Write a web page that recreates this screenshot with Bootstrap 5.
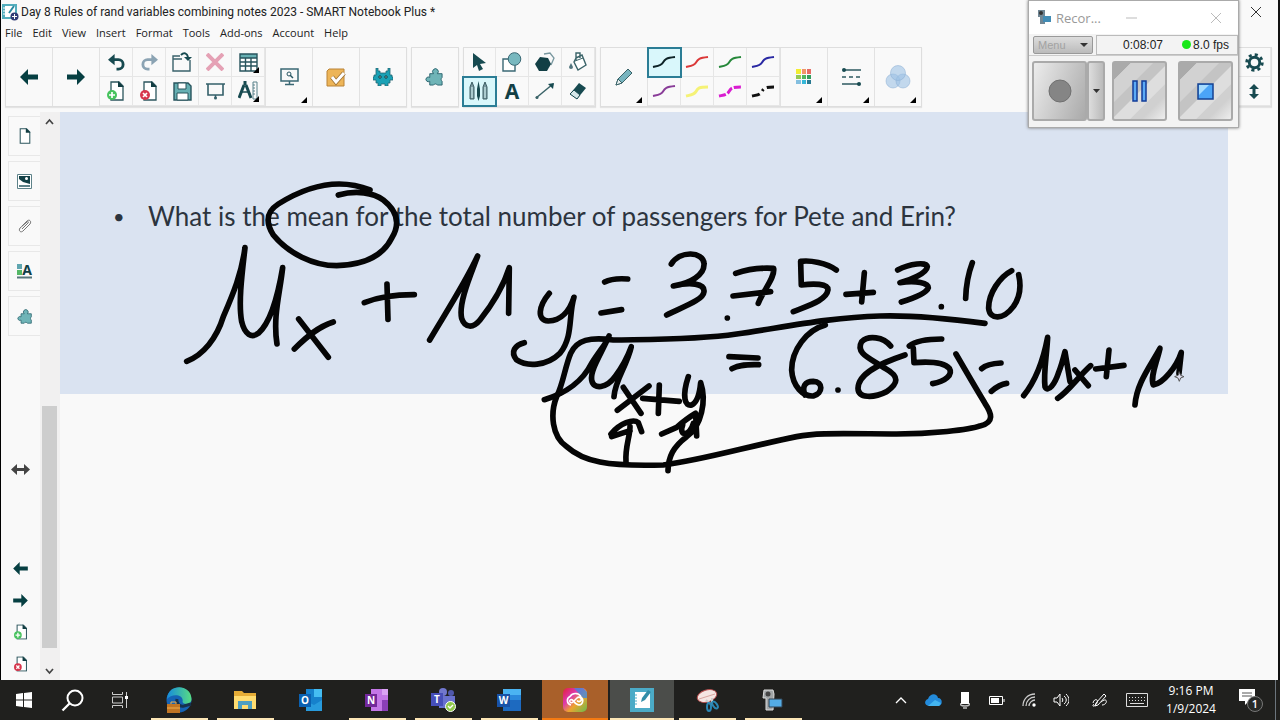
<!DOCTYPE html>
<html lang="en">
<head>
<meta charset="utf-8">
<meta name="viewport" content="width=device-width, initial-scale=1">
<title>SMART Notebook Plus</title>
<link href="https://cdn.jsdelivr.net/npm/bootstrap@5.3.0/dist/css/bootstrap.min.css" rel="stylesheet">
<style>
body{font-family:"Open Sans","Noto Sans",sans-serif;font-size:12px;line-height:16px;color:#222;background:#f9f9f9;overflow:hidden}
svg{display:block;flex:none}
.btn{--bs-btn-border-radius:0;font-size:12px;line-height:16px;color:inherit;display:flex;align-items:center;justify-content:center;padding:0;border:0}
.app{min-height:100vh;position:relative}
.work{border-left:1px solid #000;border-right:2px solid #111;min-height:0}
.titlebar{height:24px;padding:0 16px 0 1px;gap:2px}
.titletext{font-family:Roboto,sans-serif;font-size:12px}
.menus{height:23px;padding:1px 0 0 4px;gap:10px;font-size:11px}
.menus a{color:#222;text-decoration:none}
.ribbon{padding:0 6px 0 4px;gap:4px;height:65px}
.tgroup{border:1px solid #dedede;height:60px;box-shadow:0 1px 1px #e4e4e4}
.big{width:47px;align-self:stretch;position:relative}
.big+.big,.big+.smalls,.smalls+.big{border-left:1px solid #e2e2e2}
.tgroup .big:first-child,.tgroup .smalls:first-child{margin-left:-1px}
.smalls{display:grid;grid-template-rows:29px 29px;grid-auto-flow:column;grid-auto-columns:33px}
.smalls .btn{position:relative;border-right:1px solid #e6e6e6;border-bottom:1px solid #e6e6e6}
.smalls .btn.on{background:#d9f7fb;outline:2px solid #2b7d95;outline-offset:-1px;z-index:1}
.more::after{content:"";position:absolute;right:5px;bottom:3px;border-left:6px solid transparent;border-bottom:6px solid #000}
.side{width:39px;padding:4px 0 0 7px}
.tab{height:40px;width:32px;border:1px solid #e8e8e8;border-right:0;margin-bottom:5px}
.plain{height:32px;width:25px}
.resizer{margin-top:112px;margin-bottom:auto}
.scroller{width:20px;background:#f1f0f0;padding:0 3px 0 2px}
.thumb{height:242px;background:#cdcdcd;width:100%}
.canvas{position:relative;overflow:hidden}
.slide{background:#dae3f1;min-height:282px;margin-right:50px;padding:88px 0 0 53px;font-family:Lato,sans-serif;font-size:26px;line-height:32px;color:#2c343e;white-space:nowrap}
.slide ul{padding-left:35px;list-style:none}
.slide li::before{content:"•";float:left;margin-left:-35px;font-size:20px}
.ink{position:absolute;left:0;top:0;fill:none;stroke:#050505;stroke-width:17;stroke-linecap:round;stroke-linejoin:round}
.taskbar{height:40px;background:#20201e;color:#fff}
.taskbar .btn{height:40px;color:#fff;position:relative}
.sys{width:48px}
.apps{padding-left:2px}
.tapp{width:66px}
.run::after{content:"";position:absolute;left:5px;right:4px;bottom:0;height:2px;background:#fce6b6}
.cc{background:#a9602a}.cc::after{background:#f47a12;left:0;right:0}
.act{background:#4b4d4a;border-left:2px solid #20201e!important}.act::after{left:0;right:0}
.tray{width:32px}
.pen{width:44px}
.taskbar .clock{width:82px;padding-right:6px;font-size:12px;line-height:18px;text-align:center}
.recorder{position:absolute;right:41px;top:0;width:211px;height:128px;background:#f3f3f3;border:1px solid #aaa;box-shadow:0 0 3px #777;z-index:3}
.rtitle{height:33px;background:#fff;padding:0 16px 0 8px;color:#999;font-size:13px}
.rstat{height:22px;border-bottom:1px solid #ccc;padding-left:4px;gap:3px;font-family:"Liberation Sans",sans-serif;color:#222}
.rmenu{width:60px;height:18px;border:1px solid #999;border-radius:2px;background:linear-gradient(#ddd,#bbb);appearance:none;color:#a2a2a2;font-size:11px;line-height:14px;padding:0 4px}
.rmenuwrap{position:relative}
.rmenuwrap::after{content:"";position:absolute;right:5px;top:7px;border:4px solid transparent;border-top-color:#333;border-bottom:0}
.rbox{border:1px solid #bbb;height:20px;padding:0 8px 0 26px;font-size:12px;line-height:16px}
.fps{gap:2px}
.dot{width:9px;height:9px;border-radius:50%;background:#18e818}
.rbtns{padding:5px 5px 0 3px}
.rb{height:60px;width:55px;border:2px solid #aaa!important;border-radius:3px!important;background:linear-gradient(135deg,#aaa 0 15%,#d2d2d2 16% 36%,#c4c4c4 37% 50%,#dedede 51% 67%,#d0d0d0 68% 78%,#eee)}
.rb.rec{background:linear-gradient(110deg,#ececec,#aaa)}
.rb.rd{width:18px;background:linear-gradient(90deg,#ddd,#bbb)}
.pausebtn{margin-right:5px}
</style>
</head>
<body>
<svg width="0" height="0" class="position-absolute" aria-hidden="true"><defs>
<symbol id="left" viewBox="0 0 18 16"><path d="M0 8 8 0v5.500h10v5H8V16z" fill="#063f42"/></symbol>
<symbol id="right" viewBox="0 0 18 16"><path d="M18 8 10 0v5.500H0v5h10V16z" fill="#063f42"/></symbol>
<symbol id="undo" viewBox="0 0 18 18"><path d="M5 6h6a4.500 4.500 0 0 1 0 10H9" fill="none" stroke="currentColor" stroke-width="3"/><path d="M0 6 7 0v12z" fill="currentColor"/></symbol>
<symbol id="page" viewBox="0 0 18 20"><path d="M4 1h8l4 4v14H4z" fill="#fff" stroke="#2c565d" stroke-width="1.300"/><path d="M11 0v6h6z" fill="#123d42"/></symbol>
<symbol id="padd" viewBox="0 0 18 20"><use href="#page"/><circle cx="5" cy="14" r="5" fill="#47c35e"/><path d="M5 11v6M2 14h6" stroke="#fff" stroke-width="1.700"/></symbol>
<symbol id="pdel" viewBox="0 0 18 20"><use href="#page"/><circle cx="5" cy="14" r="5" fill="#d7364c"/><path d="m3 12 4 4m0-4-4 4" stroke="#fff" stroke-width="1.700"/></symbol>
<symbol id="puzzle" viewBox="0 0 20 19"><path d="M5 6h4a3 3 0 1 1 4 0h5v4a2.500 2.500 0 0 0 0 4v4h-5a2.300 2.300 0 0 0-4 0H5v-4a2.500 2.500 0 1 1 0-4z" fill="#6fb4b7" stroke="#2c6670"/></symbol>
<symbol id="squig" viewBox="0 0 24 12"><path d="M1 11C6 10 9 10 11 6.500S14 2 23 1" fill="none" stroke="currentColor" stroke-width="2"/></symbol>
</defs></svg>

<div class="app d-flex flex-column">
<main class="work flex-grow-1 d-flex flex-column">
  <header class="titlebar d-flex align-items-center">
    <svg width="17" height="17" viewBox="0 0 17 17"><path d="M0 0h15v15H0z" fill="#54aebd"/><path d="M3 2h10v11H3z" fill="#fff"/><path d="M1 4h3M1 7h3M1 10h3" stroke="#fff"/><path d="m7 9 5-7" stroke="#2989a0" stroke-width="2"/><circle cx="12.500" cy="12.500" r="4" fill="#303c75"/><path d="M12.500 10v5M10 12.500h5" stroke="#fff"/></svg>
    <span class="titletext flex-grow-1">Day 8 Rules of rand variables combining notes 2023 - SMART Notebook Plus *</span>
    <button class="btn" aria-label="Close"><svg width="12" height="12" viewBox="0 0 12 12"><path d="m1 1 10 10m0-10L1 11" stroke="#333"/></svg></button>
  </header>
  <nav class="menus d-flex align-items-start"><a href="#">File</a><a href="#">Edit</a><a href="#">View</a><a href="#">Insert</a><a href="#">Format</a><a href="#">Tools</a><a href="#">Add-ons</a><a href="#">Account</a><a href="#">Help</a></nav>
  <div class="ribbon d-flex">
    <div class="tgroup d-flex">
      <button class="btn big" aria-label="Previous page"><svg width="18" height="16"><use href="#left"/></svg></button>
      <button class="btn big" aria-label="Next page"><svg width="18" height="16"><use href="#right"/></svg></button>
      <div class="smalls">
        <button class="btn" aria-label="Undo"><svg width="17" height="17" color="#174a50"><use href="#undo"/></svg></button>
        <button class="btn" aria-label="Add page"><svg width="18" height="20"><use href="#padd"/></svg></button>
        <button class="btn" aria-label="Redo"><svg width="17" height="17" viewBox="0 0 18 18" color="#8ba3b3"><use href="#undo" width="18" height="18" transform="matrix(-1 0 0 1 18 0)"/></svg></button>
        <button class="btn" aria-label="Delete page"><svg width="18" height="20"><use href="#pdel"/></svg></button>
        <button class="btn" aria-label="Open"><svg width="20" height="20" viewBox="0 0 20 20"><path d="M8 4H1v15h17V8M1 7h9" fill="none" stroke="#3a626b" stroke-width="1.400"/><path d="M9 3c3-3 6-2 7 2" fill="none" stroke="#174a50" stroke-width="2"/><path d="M12 5h8l-4 4z" fill="#174a50"/></svg></button>
        <button class="btn" aria-label="Save"><svg width="19" height="19" viewBox="0 0 19 19"><path d="M1 1h14l3 3v14H1z" fill="#66afb2" stroke="#28545d" stroke-width="1.400"/><path d="M5 1h8v6H5zM4 11h11v7H4z" fill="#fff" stroke="#28545d"/></svg></button>
        <button class="btn" aria-label="Delete"><svg width="18" height="18" viewBox="0 0 18 18"><path d="m1 1 16 16m0-16L1 17" stroke="#e5a1b5" stroke-width="4"/></svg></button>
        <button class="btn" aria-label="Screen shade"><svg width="19" height="18" viewBox="0 0 19 18"><path d="M0 2h19M2 2v11h15V2M9.500 13v3" fill="none" stroke="#35606a" stroke-width="1.600"/><circle cx="9.500" cy="16" r="1.500" fill="#35606a"/></svg></button>
        <button class="btn more" aria-label="Table"><svg width="19" height="19" viewBox="0 0 19 19"><path d="M1 1h17v17H1z" fill="#fff"/><path d="M1 1h17v4H1z" fill="#66afb2"/><path d="M1 1h17v17H1zM1 5h17M1 9h17M1 13h17M6.500 5v13M12 5v13" fill="none" stroke="#28545d" stroke-width="1.400"/></svg></button>
        <button class="btn more" aria-label="Measurement tools"><svg width="20" height="20" viewBox="0 0 20 20"><path d="M7 0v4M6 4 1 17M8 4l5 13" fill="none" stroke="#174a50" stroke-width="3"/><path d="M4 11h6" stroke="#174a50" stroke-width="1.500"/><path d="M15 1h4v17h-4zM15 4h2M15 7h2M15 10h2M15 13h2" fill="none" stroke="#58818a"/></svg></button>
      </div>
      <button class="btn big more" aria-label="Screen capture"><svg width="19" height="18" viewBox="0 0 19 18"><path d="M1 1h17v12H1zM9.500 13v3M5 16.500h9" fill="none" stroke="#3a6874" stroke-width="1.500"/><circle cx="9" cy="6" r="2" fill="none" stroke="#295763"/><path d="m10 7 3 3" stroke="#295763" stroke-width="1.500"/></svg></button>
      <button class="btn big" aria-label="Response"><svg width="20" height="19" viewBox="0 0 20 19"><path d="M3 1h15v17H1V3z" fill="#edb558" stroke="#ba8337"/><path d="m6 9 4 5 8-9" fill="none" stroke="#9c7032" stroke-width="4.500"/><path d="m6 9 4 5 8-9" fill="none" stroke="#fff" stroke-width="3"/></svg></button>
      <button class="btn big" aria-label="Game activities"><svg width="20" height="18" viewBox="0 0 20 18"><path d="M3 0h2v3h2v2h6V3h2V0h2v7h2v2h1v3h-3v3h-2v3h-3v-2H8v2H5v-3H3v-3H0V9h1V7h2z" fill="#1aa1b5" stroke="#246775" stroke-width=".8"/><path d="M6 8h2v2H6zm6 0h2v2h-2z" fill="#e5fbfd" stroke="#123d42"/></svg></button>
    </div>
    <div class="tgroup d-flex"><button class="btn big" aria-label="Add-ons"><svg width="19" height="18"><use href="#puzzle"/></svg></button></div>
    <div class="tgroup d-flex"><div class="smalls">
      <button class="btn" aria-label="Select"><svg width="14" height="18" viewBox="0 0 14 18"><path d="M1 0v15l4-3 2 6 4-2-3-5 6-1z" fill="#174a50"/></svg></button>
      <button class="btn on" aria-label="Pens"><svg width="20" height="20" viewBox="0 0 20 20"><path d="M1 18V6l2-5 2 5v12zM14 18V6l2-5 2 5v12z" fill="#78979f" stroke="#3c5e65"/><path d="M3 6v11M16 6v11" stroke="#dff"/><path d="M8 8 9.500 0 11 8v7l-1.500 5L8 15z" fill="#174a50"/></svg></button>
      <button class="btn" aria-label="Shapes"><svg width="20" height="20" viewBox="0 0 20 20"><path d="M1 7h12v12H1z" fill="#fff" stroke="#3a6874" stroke-width="1.400"/><circle cx="12.500" cy="7" r="6.300" fill="#78b8bf" stroke="#3a6874"/></svg></button>
      <button class="btn" aria-label="Text"><svg width="22" height="28" viewBox="0 0 22 28"><text x="11" y="22" font-family="Noto Sans" font-weight="700" font-size="21" text-anchor="middle" fill="#123f45">A</text></svg></button>
      <button class="btn" aria-label="Regular polygons"><svg width="20" height="20" viewBox="0 0 20 20"><path d="m9 2 6-1 4 5-3 7" fill="none" stroke="#78979f" stroke-width="1.300"/><path d="m5 5 8 1 3 6-4 7H4l-4-7z" fill="#123f45"/></svg></button>
      <button class="btn" aria-label="Lines"><svg width="20" height="18" viewBox="0 0 20 18"><path d="M1 16 18 2" stroke="#3a6368" stroke-width="1.500"/><circle cx="2" cy="15.500" r="1.500" fill="#3a6368"/><path d="m19 1-1 6-5-5z" fill="#174a50"/></svg></button>
      <button class="btn" aria-label="Fill"><svg width="18" height="20" viewBox="0 0 18 20"><path d="m7 6 6-3 4 10-8 5-4-8zM7 8V1h4v5" fill="#fff" stroke="#3a6368" stroke-width="1.400"/><path d="m6 9 8-3" stroke="#3a6368"/><path d="m2 11 2 4a2 2 0 1 1-4 0z" fill="#51747d"/></svg></button>
      <button class="btn" aria-label="Eraser"><svg width="18" height="18" viewBox="0 0 18 18"><path d="m10 1 7 5-9 11-7-5z" fill="#174a50"/><path d="m5 8 6 5-3 4-7-5z" fill="#d5e7e9" stroke="#174a50"/></svg></button>
    </div></div>
    <div class="tgroup d-flex">
      <button class="btn big more" aria-label="Pen type"><svg width="18" height="18" viewBox="0 0 18 18"><path d="m1 17 2-6L13 1l4 4L7 15z" fill="#78b4bf" stroke="#3a6368"/><path d="m3 11 4 4-6 2z" fill="#e9efef" stroke="#3a6368"/></svg></button>
      <div class="smalls">
        <button class="btn on" aria-label="Black pen"><svg width="24" height="12" color="#0d2226"><use href="#squig"/></svg></button>
        <button class="btn" aria-label="Purple pen"><svg width="24" height="12" color="#893c98"><use href="#squig"/></svg></button>
        <button class="btn" aria-label="Red pen"><svg width="24" height="12" color="#db3838"><use href="#squig"/></svg></button>
        <button class="btn" aria-label="Yellow highlighter"><svg width="24" height="13" viewBox="0 0 24 13"><path d="M1 11C6 10 9 10 11 6.500S14 2 23 2" fill="none" stroke="#f5f276" stroke-width="3"/></svg></button>
        <button class="btn" aria-label="Green pen"><svg width="24" height="12" color="#26883a"><use href="#squig"/></svg></button>
        <button class="btn" aria-label="Magenta dashed pen"><svg width="24" height="13" viewBox="0 0 24 13"><path d="M1 11C6 10 9 10 11 6.500S14 2 23 2" fill="none" stroke="#d91cd0" stroke-width="3" stroke-dasharray="7 2"/></svg></button>
        <button class="btn" aria-label="Blue pen"><svg width="24" height="12" color="#2928a3"><use href="#squig"/></svg></button>
        <button class="btn" aria-label="Black dashed pen"><svg width="24" height="13" viewBox="0 0 24 13"><path d="M1 11C6 10 9 10 11 6.500S14 2 23 2" fill="none" stroke="#111" stroke-width="3" stroke-dasharray="8 4 2 4"/></svg></button>
      </div>
      <button class="btn big more" aria-label="Colours"><svg width="16" height="16" viewBox="0 0 16 16"><path d="M0 0h5v5H0z" fill="#f3ed31"/><path d="M6 0h4v5H6z" fill="#f19469"/><path d="M11 0h4v5h-4z" fill="#e56c64"/><path d="M0 6h5v4H0z" fill="#95c953"/><path d="M6 6h4v4H6z" fill="#50b65d"/><path d="M11 6h4v4h-4z" fill="#339c5c"/><path d="M0 11h5v4H0z" fill="#84bfe0"/><path d="M6 11h4v4H6z" fill="#35b7d8"/><path d="M11 11h4v4h-4z" fill="#287991"/></svg></button>
      <button class="btn big more" aria-label="Line style"><svg width="19" height="18" viewBox="0 0 19 18"><path d="M1 2h18M0 16h17" stroke="#2e5960" stroke-width="1.300"/><path d="M0 9h19" stroke="#2e5960" stroke-width="1.300" stroke-dasharray="4 3"/><circle cx="2" cy="2" r="2" fill="#174a50"/><circle cx="17" cy="16" r="2" fill="#174a50"/></svg></button>
      <button class="btn big more" aria-label="Transparency"><svg width="26" height="24" viewBox="0 0 26 24"><g fill="#9cc2e4" fill-opacity=".6" stroke="#8aaed3" stroke-opacity=".5"><circle cx="8" cy="16" r="7"/><circle cx="18" cy="16" r="7"/><circle cx="13" cy="8" r="7.500"/></g></svg></button>
    </div>
    <div class="tgroup ms-auto"><div class="smalls">
      <button class="btn" aria-label="Settings"><svg width="19" height="19" viewBox="0 0 20 20"><circle cx="10" cy="10" r="5.500" fill="none" stroke="#174a50" stroke-width="3"/><circle cx="10" cy="10" r="8.200" fill="none" stroke="#174a50" stroke-width="3" stroke-dasharray="3.200 3.240"/></svg></button>
      <button class="btn" aria-label="Move toolbar"><svg width="10" height="15" viewBox="0 0 10 15"><path d="m5 0 5 5H6.500v5H10l-5 5-5-5h3.500V5H0z" fill="#174a50"/></svg></button>
    </div></div>
  </div>

  <div class="d-flex flex-grow-1">
    <aside class="side d-flex flex-column">
      <button class="btn tab" aria-label="Page sorter"><svg width="14" height="16" viewBox="3 0 14 20"><use href="#page" width="18" height="20"/></svg></button>
      <button class="btn tab" aria-label="Gallery"><svg width="15" height="15" viewBox="0 0 15 15"><path d="M.5.500h14v14H.5z" fill="#fff" stroke="#5d8289"/><path d="M2 2h11v8L6 8 2 5z" fill="#123f45"/><circle cx="9.500" cy="4.500" r="1.500" fill="#fff"/><path d="M2 12h11" stroke="#5d8289" stroke-width="2"/></svg></button>
      <button class="btn tab" aria-label="Attachments"><svg width="14" height="14" viewBox="0 0 14 14"><path d="m4 10 6-6c1-1 0-2-1-1L2 9c-2 3 1 5 3 3l7-7c2-3-1-5-3-3L4 7" fill="none" stroke="#777"/></svg></button>
      <button class="btn tab" aria-label="Properties"><svg width="18" height="20" viewBox="0 0 18 20"><path d="M1 3h5v5H1z" fill="#5fa6b0"/><path d="M1 9h5v5H1z" fill="#53b765"/><path d="M1 16.500h15" stroke="#55767b" stroke-width="2"/><text x="11" y="14" text-anchor="middle" font-family="Noto Sans" font-size="14" font-weight="700" fill="#123f45">A</text></svg></button>
      <button class="btn tab" aria-label="Add-ons panel"><svg width="16" height="15"><use href="#puzzle"/></svg></button>
      <button class="btn plain resizer" aria-label="Resize panel"><svg width="19" height="11" viewBox="0 0 19 11"><path d="M0 5.500 6 0v4h7V0l6 5.500-6 5.500V7H6v4z" fill="#444"/></svg></button>
      <button class="btn plain" aria-label="Back"><svg width="15" height="13"><use href="#left"/></svg></button>
      <button class="btn plain" aria-label="Forward"><svg width="15" height="13"><use href="#right"/></svg></button>
      <button class="btn plain" aria-label="New page"><svg width="14" height="16"><use href="#padd"/></svg></button>
      <button class="btn plain" aria-label="Remove page"><svg width="14" height="16"><use href="#pdel"/></svg></button>
    </aside>
    <div class="scroller d-flex flex-column align-items-center">
      <svg width="9" height="20" viewBox="0 0 9 20"><path d="m1 12 3.500-4L8 12" fill="none" stroke="#444" stroke-width="1.700"/></svg>
      <div class="thumb mt-auto"></div>
      <svg width="9" height="32" viewBox="0 0 9 32"><path d="m1 21 3.500 4L8 21" fill="none" stroke="#444" stroke-width="1.700"/></svg>
    </div>
    <section class="canvas flex-grow-1">
      <div class="slide"><ul class="m-0"><li>What is the mean for the total number of passengers for Pete and Erin?</li></ul></div>
      <svg class="ink" width="1220" height="568" viewBox="60 112 1220 568" role="img" aria-label="Handwritten working">
        <g transform="translate(170 170) scale(.3333)">
          <path d="M505 75C560 60 610 68 640 90C685 125 690 165 665 205C635 265 570 285 500 287C430 287 355 250 310 195C285 155 290 125 325 102C400 55 500 20 600 60"/>
          <path d="M50 574C100 555 140 505 160 440C190 370 215 310 225 233C215 320 205 400 215 455C225 495 245 505 265 490C305 455 325 370 338 293C330 370 308 440 321 522M386 447 475 562M373 537C410 500 445 470 490 456"/>
          <path d="M583 398C630 380 670 375 733 374M651 342 654 448M779 510C820 440 885 340 923 258C900 320 865 400 875 445C885 475 910 475 930 450C970 400 1000 350 1018 293L1016 430"/>
          <path d="M1138 370C1105 410 1100 450 1135 453C1175 452 1200 420 1212 382C1195 440 1210 500 1170 550C1130 590 1070 590 1040 570C1020 545 1035 525 1063 518"/>
        </g>
        <g transform="translate(530 240) scale(.3333)">
          <path d="M224 126C245 115 265 115 293 117M213 219 275 209M424 72C450 30 520 35 522 70C525 105 480 130 430 138C480 125 525 130 522 155C520 180 460 200 410 225M592 234h.1M617 100C660 85 700 83 731 85C735 115 700 150 685 190M609 168 722 155M919 90C890 68 840 60 812 64L814 135C850 130 895 130 894 150C890 180 840 195 790 215"/>
          <path d="M1365 250C1250 235 1150 225 1050 228C900 232 760 262 620 282C500 300 350 298 250 300C180 290 140 300 122 340C105 380 100 430 80 470C60 520 65 590 110 620C160 665 230 680 400 675C520 660 650 620 800 590C860 578 920 581 1100 582C1200 582 1320 570 1350 558C1395 548 1385 520 1365 490C1335 440 1300 380 1278 342"/>
          <path d="M43 479C110 460 160 420 185 370C210 330 230 310 237 288C215 340 180 390 185 420C190 450 230 445 255 410C285 370 295 345 304 320C290 380 255 420 252 470M280 442 333 520M262 511 357 438M338 475 448 484M388 435 385 520"/>
          <path d="M475 410C455 470 465 500 485 495C505 485 510 450 512 428C530 480 515 560 470 590C430 620 415 650 414 692M288 665C285 620 300 590 300 560M245 590 300 572M243 582C270 550 310 535 325 548L335 575M395 582 440 562C460 545 480 530 497 520L500 588M458 555C445 590 480 590 490 550"/>
          <path d="M597 350 684 354M606 386C630 372 660 374 686 374M886 255C830 270 785 330 785 390C788 440 820 470 850 468C880 460 880 425 850 424C825 424 815 440 825 465M924 450h.1"/>
        </g>
        <g transform="translate(830 240) scale(.3333)">
          <path d="M48 163 130 157M103 98 95 186M203 90C240 70 290 65 292 80C290 100 240 120 210 128C260 120 295 130 295 143C290 160 250 175 214 186M334 200h.1M427 68C415 100 408 140 407 175M545 92C510 110 475 160 476 205C480 240 520 240 550 200C575 165 572 130 566 104"/>
          <path d="M182 318C160 290 115 285 95 305C75 340 120 355 165 385C210 410 205 430 170 455C130 475 85 475 84 445C85 400 150 370 225 345M335 297C300 297 260 300 238 318M250 325 252 368C290 365 340 365 358 385C370 405 345 425 308 431M455 386C470 372 490 370 513 369M484 454C500 440 515 432 530 430"/>
          <path d="M581 467C615 425 640 360 653 292C650 350 640 400 645 440C655 460 675 430 685 400C695 375 700 355 705 335L720 425M735 390 775 437M683 475C715 455 745 410 782 377M797 387 882 376M837 330 829 410M915 495C920 430 960 380 990 325C980 370 960 410 970 435C1000 430 1040 380 1054 337L1047 400"/>
          <path d="m1048 396 4 10 10 4-10 4-4 10-4-10-10-4 10-4z" fill="#dde" stroke="#555" stroke-width="3"/>
        </g>
      </svg>
    </section>
  </div>
</main>

<footer class="taskbar d-flex">
  <button class="btn sys" aria-label="Start"><svg width="16" height="16" viewBox="0 0 16 16"><path d="m0 2 7-1v6.500H0zm8-1 8-1v7.500H8zM0 8.500h7V15l-7-1zm8 0h8V16l-8-1z" fill="#fff"/></svg></button>
  <button class="btn sys" aria-label="Search"><svg width="23" height="23" viewBox="0 0 23 23"><circle cx="14" cy="9" r="7.500" fill="none" stroke="#fff" stroke-width="2"/><path d="m8.500 14.500-7 7" stroke="#fff" stroke-width="2.300"/></svg></button>
  <button class="btn sys" aria-label="Task view"><svg width="16" height="16" viewBox="0 0 16 16"><path d="M.5 0v2.500h10V0M.5 5h10v6H.5zM.5 16v-2.500h10V16M14.500 0v16" fill="none" stroke="#ccc"/><path d="M13 4h3v3h-3z" fill="#fff"/></svg></button>
  <div class="apps d-flex">
  <button class="btn tapp run" aria-label="Edge"><svg width="26" height="26" viewBox="0 0 26 26"><defs><linearGradient id="eg"><stop stop-color="#168bdc"/><stop offset="1" stop-color="#58dd83"/></linearGradient></defs><circle cx="13" cy="13" r="12.500" fill="#1563b5"/><path d="M1 12C2-4 25-3 25.500 12c0 6-8 6-9 3 2-8-11-9-15.500-3" fill="url(#eg)"/><path d="M11 12c-1 4 2 8 7 7l7-2" fill="none" stroke="#17314d" stroke-width="3"/><path d="M1 17h13v9H1z" fill="#c17524"/><path d="M5 17v-2h5v2M1 21h13" fill="none" stroke="#f1af4c"/></svg></button>
  <button class="btn tapp run" aria-label="File Explorer"><svg width="22" height="19" viewBox="0 0 22 19"><path d="M0 0h8l2 2h12v16H0z" fill="#e5ac36"/><path d="M0 5h22v13H0z" fill="#ffdc70"/><path d="M4 18v-8h14v8h-4v-4H8v4z" fill="#4d9fc2"/></svg></button>
  <button class="btn tapp" aria-label="Outlook"><svg width="24" height="22" viewBox="0 0 24 22"><path d="M7 0h16v22H7z" fill="#1681cc"/><path d="M15 0h8v8h-8z" fill="#45bdf2"/><path d="m7 12 8 4 8-5v11H7z" fill="#289bdd"/><path d="M0 5h12v13H0z" fill="#0b61b1"/><text x="6" y="15" text-anchor="middle" font-family="Open Sans" font-size="10" font-weight="700" fill="#fff">O</text></svg></button>
  <button class="btn tapp run" aria-label="OneNote"><svg width="24" height="22" viewBox="0 0 24 22"><path d="M6 0h17v22H6z" fill="#c477e7"/><path d="M17 0h6v6h-6z" fill="#dba3f4"/><path d="M17 11h6v11h-6z" fill="#8b3fb8"/><path d="M0 5h12v13H0z" fill="#73289a"/><text x="6" y="15" text-anchor="middle" font-family="Open Sans" font-size="10" font-weight="700" fill="#fff">N</text></svg></button>
  <button class="btn tapp run" aria-label="Teams"><svg width="25" height="24" viewBox="0 0 25 24"><circle cx="12" cy="4" r="4" fill="#7177ce"/><circle cx="20" cy="5" r="3" fill="#5058ad"/><path d="M8 8h16v12H8z" fill="#6971cf"/><path d="M0 5h12v13H0z" fill="#464eb8"/><text x="6" y="15" text-anchor="middle" font-family="Open Sans" font-size="10" font-weight="700" fill="#fff">T</text><circle cx="19.500" cy="18.500" r="5" fill="#91c94c" stroke="#fff"/><path d="m17 18 2 2 3-3" fill="none" stroke="#fff" stroke-width="1.400"/></svg></button>
  <button class="btn tapp run" aria-label="Word"><svg width="24" height="22" viewBox="0 0 24 22"><path d="M6 0h18v22H6z" fill="#1d6ac0"/><path d="M6 0h18v6H6z" fill="#4bb4f2"/><path d="M6 6h18v5H6z" fill="#2b89dc"/><path d="M0 5h13v13H0z" fill="#1852a7"/><text x="6.500" y="15" text-anchor="middle" font-family="Open Sans" font-size="10" font-weight="700" fill="#fff">W</text></svg></button>
  <button class="btn tapp run cc" aria-label="Creative Cloud"><svg width="24" height="24" viewBox="0 0 24 24"><defs><linearGradient id="cg" x2="1" y2="1"><stop stop-color="#e4213b"/><stop offset=".35" stop-color="#dc39af"/><stop offset=".6" stop-color="#eea42e"/><stop offset="1" stop-color="#65bc4f"/></linearGradient></defs><rect width="24" height="24" rx="5" fill="url(#cg)"/><path d="M20 0h-9l9 10h4V4z" fill="#4188df" opacity=".8"/><path d="M8 17a4.500 4.500 0 0 1-1-8.500C10 4 17 5 18 9.500c3 2 2 7-2 7.500-3 0-4-2-6-4.500-2-2-4 0-3 1.500 1 1 2 1 3 0l4-4c2-2 5 0 4 2.500-1 1.500-3 1.500-4 0" fill="none" stroke="#fff" stroke-width="1.600"/></svg></button>
  <button class="btn tapp run act" aria-label="SMART Notebook"><svg width="24" height="24" viewBox="0 0 24 24"><path d="M0 0h24v24H0z" fill="#4babc7"/><path d="M5 4h15v16H5z" fill="#fff"/><path d="M3 7h4M3 10h4M3 13h4M3 16h4" stroke="#4babc7"/><path d="m11 14 1-4 6-8 3 2-6 8z" fill="#328da8"/></svg></button>
  <button class="btn tapp run" aria-label="Snipping tool"><svg width="23" height="23" viewBox="0 0 23 23"><ellipse cx="11" cy="7" rx="10" ry="6" transform="rotate(-17 11 7)" fill="#f5e5e2" stroke="#b34e4e"/><path d="m3 10 16-5" stroke="#d9a5a0"/><path d="M10 11l6 5M16 9v7" stroke="#ccc" stroke-width="2"/><ellipse cx="13" cy="18" rx="2" ry="4" fill="none" stroke="#2a86b4" stroke-width="2"/><ellipse cx="19" cy="16" rx="2" ry="4" transform="rotate(-35 19 16)" fill="none" stroke="#2a86b4" stroke-width="2"/></svg></button>
  <button class="btn tapp run" aria-label="Recorder"><svg width="22" height="23" viewBox="0 0 22 23"><path d="M2 1h9l1 4-1 16H4V9H1z" fill="#a1a5a7" stroke="#ddd"/><circle cx="6" cy="5" r="2.500" fill="#444"/><path d="M7 10h13v8H7z" fill="#54ace5" stroke="#345"/></svg></button>
  </div>
  <div class="d-flex ms-auto">
    <button class="btn tray" aria-label="Show hidden icons"><svg width="12" height="8" viewBox="0 0 12 8"><path d="m1 7 5-5 5 5" fill="none" stroke="#fff" stroke-width="1.300"/></svg></button>
    <button class="btn tray" aria-label="OneDrive"><svg width="17" height="12" viewBox="0 0 17 12"><path d="M4 12c-5 0-5-6-1-7 2-6 9-6 10-1 5 0 5 8 0 8z" fill="#238bdb"/><path d="m3 12 7-6 6 3-2 3z" fill="#43b4ef"/></svg></button>
    <button class="btn tray" aria-label="Microphone"><svg width="10" height="17" viewBox="0 0 10 17"><path d="M1 0h8v12H1z" fill="#fff"/><path d="M0 11c0 4 10 4 10 0M3 16h4" fill="none" stroke="#bbb" stroke-width="1.500"/></svg></button>
    <button class="btn tray" aria-label="Battery"><svg width="16" height="9" viewBox="0 0 16 9"><path d="M.5.500h13v8H.5zM15 3v3" fill="none" stroke="#fff"/><path d="M2 2h8v5H2z" fill="#fff"/></svg></button>
    <button class="btn tray" aria-label="Wi-Fi"><svg width="14" height="14" viewBox="0 0 14 14"><path d="M1 13C1 6 6 1 13 1M4 13c0-5 4-9 9-9M7 13c0-3 3-6 6-6" fill="none" stroke="#ccc" stroke-width="1.300"/><circle cx="12" cy="12" r="1.700" fill="#fff"/></svg></button>
    <button class="btn tray" aria-label="Volume"><svg width="16" height="14" viewBox="0 0 16 14"><path d="M1 5h3l3-4v12L4 9H1zM9 5c1 1 1 3 0 4M11 3c3 2 3 6 0 8M13 1c4 4 4 8 0 12" fill="none" stroke="#fff"/></svg></button>
    <button class="btn pen" aria-label="Pen input"><svg width="15" height="15" viewBox="0 0 15 15"><path d="M4 10 12 1l2 2-8 9-3 1zM1 10c1-5 6-4 4 0s-6 4-3 1m7-2c7-6 7 3 1 3" fill="none" stroke="#fff"/></svg></button>
    <button class="btn tray" aria-label="Touch keyboard"><svg width="22" height="14" viewBox="0 0 22 14"><path d="M.5.500h21v13H.5z" fill="none" stroke="#ddd"/><path d="M3 4.500h16M3 7.500h16" stroke="#ddd" stroke-dasharray="1 2"/><path d="M4 10.500h14" stroke="#ddd"/></svg></button>
    <button class="btn clock" aria-label="Clock">9:16 PM<br>1/9/2024</button>
    <button class="btn tray" aria-label="Notifications, 1 new"><svg width="26" height="26" viewBox="0 0 26 26"><path d="M1 2h16v12h-6l-4 4v-4H1z" fill="#fff"/><path d="M4 6h10M4 9h10" stroke="#555"/><circle cx="17" cy="17" r="7.500" fill="#272927" stroke="#777"/><text x="17" y="21" text-anchor="middle" font-family="Open Sans" font-size="11" font-weight="600" fill="#fff">1</text></svg></button>
    <div class="border-start border-secondary ms-2 pe-1"></div>
  </div>
</footer>

<section class="recorder" aria-label="Recorder">
  <div class="rtitle d-flex align-items-center">
    <svg width="15" height="17" viewBox="0 0 15 17"><path d="M1 1h7v14H3V8H1z" fill="#718795"/><circle cx="4" cy="4" r="2" fill="#333"/><path d="M6 7h8v6H6z" fill="#428cb5"/></svg>
    <span class="ms-1">Recor...</span>
    <button class="btn mx-auto pe-5" aria-label="Minimize"><svg width="11" height="12"><path d="M0 6h11" stroke="#bbb"/></svg></button>
    <button class="btn" aria-label="Close recorder"><svg width="12" height="12" viewBox="0 0 12 12"><path d="m1 1 10 10m0-10L1 11" stroke="#bbb"/></svg></button>
  </div>
  <div class="rstat d-flex align-items-center">
    <label class="rmenuwrap"><select class="rmenu d-block" aria-label="Menu"><option>Menu</option></select></label>
    <div class="rbox flex-grow-1 d-flex align-items-center justify-content-between"><span>0:08:07</span><span class="fps d-flex align-items-center"><i class="dot"></i>8.0 fps</span></div>
  </div>
  <div class="rbtns d-flex justify-content-between">
    <div class="d-flex"><button class="btn rb rec" aria-label="Record"><svg width="24" height="24" viewBox="0 0 24 24"><circle cx="12" cy="12" r="11" fill="#858585" stroke="#707070"/></svg></button><button class="btn rb rd" aria-label="Record options"><svg width="7" height="4" viewBox="0 0 7 4"><path d="M0 0h7L3.500 4z" fill="#333"/></svg></button></div>
    <button class="btn rb pausebtn" aria-label="Pause"><svg width="15" height="22" viewBox="0 0 15 22"><path d="M1 1h4v20H1zM10 1h4v20h-4z" fill="#5caaf5" stroke="#123d99" stroke-width="1.500"/></svg></button>
    <button class="btn rb" aria-label="Stop"><svg width="17" height="17" viewBox="0 0 17 17"><path d="M1 1h15v15H1z" fill="#4ba4f7" stroke="#164292" stroke-width="1.500"/><path d="M2 2h10L2 12z" fill="#a6dcff"/></svg></button>
  </div>
</section>
</div>
<script src="https://cdn.jsdelivr.net/npm/bootstrap@5.3.0/dist/js/bootstrap.bundle.min.js"></script>
</body>
</html>
